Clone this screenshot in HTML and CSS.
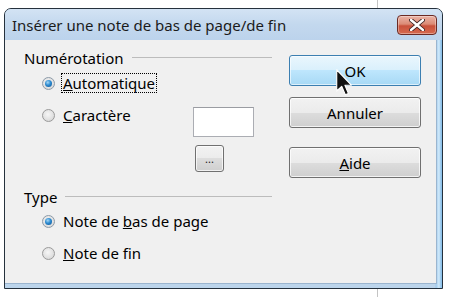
FILE: index.html
```html
<!DOCTYPE html>
<html lang="fr">
<head>
<meta charset="utf-8">
<title>Insérer une note de bas de page/de fin</title>
<link rel="stylesheet" href="styles.css">
</head>
<body>
<div class="window">
  <div class="titlebar">
    <span class="title">Insérer une note de bas de page/de fin</span>
    <span class="close">
      <svg width="16" height="12" viewBox="0 0 16 12"><path d="M2 1 L14 11 M14 1 L2 11" stroke="#3a2020" stroke-width="4.2" stroke-linecap="round"/><path d="M2 1 L14 11 M14 1 L2 11" stroke="#ffffff" stroke-width="2.4" stroke-linecap="round"/></svg>
    </span>
  </div>
  <div class="client">
    <div class="left">
      <div class="group-head"><span>Numérotation</span><span class="rule"></span></div>
      <div class="row r-auto"><span class="radio checked"></span><span class="label focus"><u>A</u>utomatique</span></div>
      <div class="char-grid">
        <div class="row"><span class="radio"></span><span class="label"><u>C</u>aractère</span></div>
        <span class="textbox"></span>
        <span class="dots">...</span>
      </div>
      <div class="group-head type-head"><span>Type</span><span class="rule"></span></div>
      <div class="row r-bas"><span class="radio checked"></span><span class="label">Note de <u>b</u>as de page</span></div>
      <div class="row r-fin"><span class="radio"></span><span class="label"><u>N</u>ote de fin</span></div>
    </div>
    <div class="right">
      <span class="btn default">OK</span>
      <span class="btn">Annuler</span>
      <span class="btn help"><u>A</u>ide</span>
    </div>
  </div>
  <svg class="cursor" width="17" height="27" viewBox="0 0 12 19"><path d="M0.5 0.5 L0.5 15.5 L4 12.2 L6.6 18.2 L8.8 17.3 L6.3 11.4 L10.8 11.4 Z" fill="#111" stroke="#fff" stroke-width="0.8" stroke-linejoin="round"/></svg>
</div>
</body>
</html>
```

FILE: styles.css
```css
html, body {
  margin: 0;
  padding: 0;
}
body {
  width: 450px;
  height: 297px;
  overflow: hidden;
  background: #fff linear-gradient(to right, transparent 377px, #c4c4c4 377px, #c4c4c4 378px, transparent 378px);
  font-family: "Noto Sans", "Open Sans", sans-serif;
  font-size: 15px;
  color: #000;
}
.window {
  position: relative;
  box-sizing: border-box;
  margin: 8px 0 0 4px;
  width: 439px;
  height: 281px;
  border: 1px solid #25313d;
  border-radius: 7px 7px 0 0;
  background: linear-gradient(to right, #bcd5ec 0, #bcd5ec 430px, #9fcbee 431px, #d4ebfb 434px, #8ec2ea 436px);
  display: flex;
  flex-direction: column;
}
.titlebar {
  height: 31px;
  flex: none;
  display: flex;
  align-items: center;
  justify-content: space-between;
  padding: 0 5px 0 7px;
  border-radius: 6px 6px 0 0;
  background: linear-gradient(#d3e3f4, #c3d8ee 50%, #bcd3ec);
}
.title {
  color: #1b1b1b;
  font-size: 15px;
  margin-top: 1px;
}
.close {
  width: 40px;
  height: 20px;
  box-sizing: border-box;
  border: 1px solid #6b2a24;
  border-radius: 4px;
  background: linear-gradient(#eab3a6 0, #dc8b76 45%, #c9513b 55%, #d66a4f 100%);
  display: flex;
  align-items: center;
  justify-content: center;
  box-shadow: inset 0 0 0 1px rgba(255,255,255,0.35);
}
.client {
  flex: 1;
  display: flex;
  margin: 0 5px 4px 0;
  background: #f0f0f0;
  border-right: 1px solid #9bb5cf;
  border-bottom: 1px solid #9bb5cf;
}
.left {
  width: 248px;
  padding: 10px 0 0 19px;
  display: flex;
  flex-direction: column;
}
.group-head {
  height: 16px;
  display: flex;
  align-items: center;
  line-height: 16px;
}
.group-head .rule {
  flex: 1;
  height: 0;
  border-top: 1px solid #bcbcbc;
  margin-left: 8px;
  margin-top: -2px;
}
.row {
  height: 20px;
  display: flex;
  align-items: center;
  padding-left: 18px;
}
.r-auto { margin-top: 7px; }
.radio {
  width: 13px;
  height: 13px;
  box-sizing: border-box;
  border-radius: 50%;
  border: 1px solid #9a9a9a;
  background: radial-gradient(circle at 45% 40%, #f6f6f6 0, #e2e2e2 55%, #cfcfcf 100%);
  display: flex;
  align-items: center;
  justify-content: center;
  flex: none;
}
.radio.checked {
  border-color: #8c9aa8;
}
.radio.checked::after {
  content: "";
  width: 7px;
  height: 7px;
  border-radius: 50%;
  background: radial-gradient(circle at 40% 35%, #a6d8f6 0, #2b8ad0 45%, #0c4f8f 100%);
}
.label {
  margin-left: 8px;
  line-height: 18px;
  white-space: nowrap;
}
.label.focus {
  margin-left: 7px;
  padding: 0 1px;
  outline: 1px dotted #000;
}
.char-grid {
  display: grid;
  grid-template-columns: 169px 61px;
  grid-template-rows: auto auto;
  margin-top: 12px;
}
.char-grid .row {
  grid-row: 1;
  grid-column: 1;
}
.textbox {
  grid-row: 1;
  grid-column: 2;
  margin-top: 2px;
  height: 30px;
  box-sizing: border-box;
  border: 1px solid #abadb3;
  border-top-color: #9a9ca2;
  background: #fff;
}
.dots {
  grid-row: 2;
  grid-column: 2;
  margin-top: 8px;
  margin-left: 2px;
  width: 29px;
  height: 27px;
  box-sizing: border-box;
  border: 1px solid #707070;
  border-radius: 3px;
  background: linear-gradient(#f2f2f2 0, #ebebeb 50%, #dddddd 50%, #cfcfcf 100%);
  box-shadow: inset 0 0 0 1px rgba(255,255,255,0.7);
  font-size: 11px;
  line-height: 26px;
  text-align: center;
  letter-spacing: 0;
  color: #222;
}
.type-head { margin-top: 17px; }
.r-bas { margin-top: 6px; }
.r-fin { margin-top: 12px; }
.right {
  margin-left: 17px;
  padding-top: 15px;
  display: flex;
  flex-direction: column;
}
.btn {
  width: 132px;
  height: 31px;
  box-sizing: border-box;
  border: 1px solid #707070;
  border-radius: 3px;
  background: linear-gradient(#f2f2f2 0, #ebebeb 50%, #dddddd 50%, #cfcfcf 100%);
  box-shadow: inset 0 0 0 1px rgba(255,255,255,0.75);
  display: flex;
  align-items: center;
  justify-content: center;
  color: #000;
}
.btn + .btn { margin-top: 11px; }
.btn.help { margin-top: 19px; }
.btn.default {
  border-color: #3c7fb1;
  background: linear-gradient(#eaf6fd 0, #d9f0fc 50%, #bee6fd 50%, #a7d9f5 100%);
  box-shadow: inset 0 0 0 1px rgba(255,255,255,0.6);
}
.cursor {
  position: absolute;
  left: 331px;
  top: 60px;
}
```
